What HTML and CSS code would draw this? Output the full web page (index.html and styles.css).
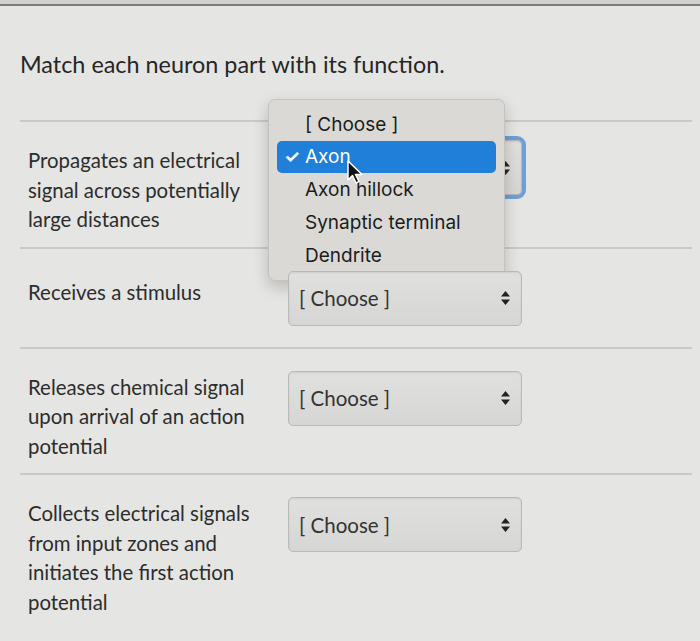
FILE: index.html
```html
<!DOCTYPE html>
<html lang="en">

<head>
    <meta charset="utf-8">
    <meta name="viewport" content="width=device-width, initial-scale=1.0">
    <title>Match neuron parts</title>
    <link rel="stylesheet" href="styles.css">
</head>

<body>
    <div class="topkant"></div>

    <main class="spoergsmaal">
        <h1 class="overskrift">Match each neuron part with its function.</h1>

        <section id="liste">
            <div class="raekke">
                <p class="tekst">Propagates an electrical signal across potentially large distances</p>
                <div class="valg aktiv">
                    <span>[ Choose ]</span>
                    <svg class="pile" width="9" height="14" viewBox="0 0 9 14"><path d="M4.5 0 L9 5.5 H0 Z M4.5 14 L9 8.5 H0 Z" /></svg>
                </div>

                <div class="menu">
                    <div class="punkt">[ Choose ]</div>
                    <div class="punkt valgt"><span class="flueben">✓</span>Axon</div>
                    <div class="punkt">Axon hillock</div>
                    <div class="punkt">Synaptic terminal</div>
                    <div class="punkt">Dendrite</div>
                    <svg class="markoer" width="22" height="26" viewBox="0 0 22 26">
                        <path d="M2 1 L2 20 L6.5 15.5 L10 23 L13 21.5 L9.5 14.5 L16 14.5 Z" fill="#111" stroke="#fff" stroke-width="1.5" stroke-linejoin="round" />
                    </svg>
                </div>
            </div>

            <div class="raekke">
                <p class="tekst kort">Receives a stimulus</p>
                <div class="valg">
                    <span>[ Choose ]</span>
                    <svg class="pile" width="9" height="14" viewBox="0 0 9 14"><path d="M4.5 0 L9 5.5 H0 Z M4.5 14 L9 8.5 H0 Z" /></svg>
                </div>
            </div>

            <div class="raekke">
                <p class="tekst">Releases chemical signal upon arrival of an action potential</p>
                <div class="valg">
                    <span>[ Choose ]</span>
                    <svg class="pile" width="9" height="14" viewBox="0 0 9 14"><path d="M4.5 0 L9 5.5 H0 Z M4.5 14 L9 8.5 H0 Z" /></svg>
                </div>
            </div>

            <div class="raekke">
                <p class="tekst">Collects electrical signals from input zones and initiates the first action potential</p>
                <div class="valg">
                    <span>[ Choose ]</span>
                    <svg class="pile" width="9" height="14" viewBox="0 0 9 14"><path d="M4.5 0 L9 5.5 H0 Z M4.5 14 L9 8.5 H0 Z" /></svg>
                </div>
            </div>
        </section>
    </main>
</body>

</html>
```

FILE: styles.css
```css
body {
    margin: 0;
    background: #e5e5e3;
    font-family: Lato, "Open Sans", sans-serif;
    color: #2d2d2d;
    height: 641px;
    overflow: hidden;
}

.topkant {
    height: 4px;
    background: #d2d2d0;
    border-bottom: 2px solid #7c7c7c;
}

.spoergsmaal {
    padding: 0 8px 0 20px;
}

.overskrift {
    margin: 0;
    padding-top: 44px;
    height: 70px;
    font-size: 23.4px;
    font-weight: 400;
    color: #262626;
}

#liste {
    border-top: 2px solid #c9c9c7;
}

.raekke {
    position: relative;
    display: flex;
    align-items: flex-start;
    min-height: 100px;
    box-sizing: border-box;
    padding: 22px 0 12px 8px;
    border-bottom: 2px solid #c9c9c7;
}

.raekke:last-child {
    border-bottom: none;
}

.tekst {
    margin: 0;
    width: 236px;
    padding-top: 2px;
    font-size: 20.4px;
    line-height: 29.5px;
}

.kort {
    padding-top: 7px;
}

.valg {
    margin-left: 24px;
    width: 234px;
    height: 55px;
    box-sizing: border-box;
    display: flex;
    align-items: center;
    justify-content: space-between;
    padding: 0 11px 0 10px;
    border: 1px solid #b9b9b7;
    border-radius: 5px;
    background: linear-gradient(#e0e0de, #d6d6d4);
    box-shadow: inset 0 1px 2px rgba(0, 0, 0, 0.08);
    font-size: 20.5px;
    color: #333;
}

.pile {
    fill: #222;
}

.aktiv {
    margin-top: -4px;
    outline: 4px solid #6f9fd6;
    outline-offset: 0;
}

.menu {
    position: absolute;
    left: 248px;
    top: -23px;
    width: 237px;
    height: 182px;
    box-sizing: border-box;
    padding: 8px 8px;
    background: #dad9d5;
    border: 1px solid #c4c3c0;
    border-radius: 7px;
    box-shadow: 0 6px 16px rgba(0, 0, 0, 0.2);
    font-family: Inter, "Noto Sans", sans-serif;
    font-size: 19px;
    color: #1c1c1c;
}

.punkt {
    height: 33px;
    line-height: 33px;
    padding-left: 28px;
}

.valgt {
    position: relative;
    height: 32px;
    line-height: 32px;
    background: #1f7fd9;
    color: #fff;
    border-radius: 5px;
}

.flueben {
    position: absolute;
    left: 7px;
    font-size: 18px;
    font-weight: 700;
}

.markoer {
    position: absolute;
    left: 77px;
    top: 60px;
}
```
